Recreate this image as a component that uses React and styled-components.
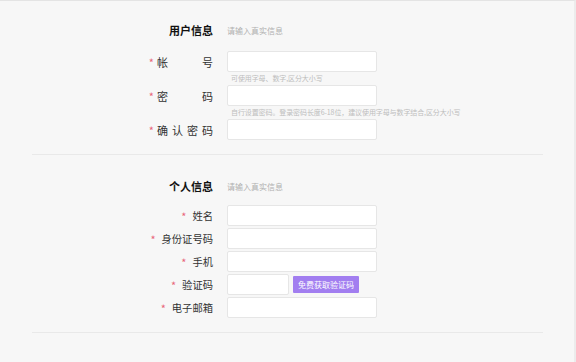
import React from "react";
import styled, { createGlobalStyle } from "styled-components";

const GlobalStyle = createGlobalStyle`
  html, body {
    margin: 0;
    padding: 0;
    background: #f7f7f7;
    font-family: "Noto Sans CJK SC", "Noto Sans", sans-serif;
  }
`;

const Page = styled.div`
  width: 576px;
  height: 362px;
  box-sizing: border-box;
  border-top: 1px solid #e4e4e4;
  border-right: 2px solid #ececec;
  padding-right: 3px;
  background: #f7f7f7;
  padding-top: 19px;
  overflow: hidden;
`;

const Section = styled.div`
  padding-bottom: 14px;
  margin-top: ${(p) => p.top || 0}px;
`;

const Divider = styled.div`
  margin: 0 28px 0 32px;
  height: 1px;
  background: #e9e9e9;
`;

const TitleRow = styled.div`
  display: flex;
  align-items: center;
  height: 20px;
  margin-bottom: ${(p) => p.gap}px;
`;

const Title = styled.div`
  width: 213px;
  text-align: right;
  font-size: 11px;
  font-weight: 700;
  color: #111;
`;

const TitleHint = styled.div`
  margin-left: 14px;
  font-size: 8px;
  color: #b0b0b0;
`;

const Row = styled.div`
  display: flex;
  align-items: center;
  height: 21px;
  margin-bottom: ${(p) => p.gap || 0}px;
`;

const LabelCell = styled.div`
  width: 213px;
  display: flex;
  justify-content: flex-end;
  align-items: center;
  font-size: ${(p) => (p.spread ? 11 : 10.3)}px;
  color: #333;
`;

const Star = styled.span`
  color: #e8667a;
  font-size: 11px;
  margin-right: ${(p) => (p.wide ? 3 : 6)}px;
`;

const Spread = styled.span`
  display: inline-block;
  width: 56px;
  text-align: justify;
  text-align-last: justify;
`;

const Input = styled.div`
  margin-left: 14px;
  width: ${(p) => p.w || 150}px;
  height: 21px;
  box-sizing: border-box;
  background: #fff;
  border: 1px solid #e6e6e6;
  border-radius: 2px;
`;

const Hint = styled.div`
  height: 13px;
  line-height: 13px;
  padding-left: 231px;
  font-size: 7px;
  letter-spacing: -0.1px;
  color: #bdbdbd;
`;

const CodeButton = styled.div`
  margin-left: 4px;
  width: 66px;
  height: 17px;
  line-height: 17px;
  text-align: center;
  background: #a27ef0;
  color: #fff;
  font-size: 8px;
  border-radius: 1px;
`;

function Field({ label, spread, w, children, gap }) {
  return (
    <Row gap={gap}>
      <LabelCell spread={spread}>
        <Star wide={spread}>*</Star>
        {spread ? <Spread>{label}</Spread> : label}
      </LabelCell>
      <Input w={w} />
      {children}
    </Row>
  );
}

export default function App() {
  return (
    <Page>
      <GlobalStyle />
      <Section>
        <TitleRow gap={11}>
          <Title>用户信息</Title>
          <TitleHint>请输入真实信息</TitleHint>
        </TitleRow>
        <Field label="帐号" spread />
        <Hint>可使用字母、数字,区分大小写</Hint>
        <Field label="密码" spread />
        <Hint>自行设置密码。登录密码长度6-18位，建议使用字母与数字结合,区分大小写</Hint>
        <Field label="确认密码" spread />
      </Section>
      <Divider />
      <Section top={21}>
        <TitleRow gap={9}>
          <Title>个人信息</Title>
          <TitleHint>请输入真实信息</TitleHint>
        </TitleRow>
        <Field label="姓名" gap={2} />
        <Field label="身份证号码" gap={2} />
        <Field label="手机" gap={2} />
        <Field label="验证码" w={62} gap={2}>
          <CodeButton>免费获取验证码</CodeButton>
        </Field>
        <Field label="电子邮箱" />
      </Section>
      <Divider />
    </Page>
  );
}
